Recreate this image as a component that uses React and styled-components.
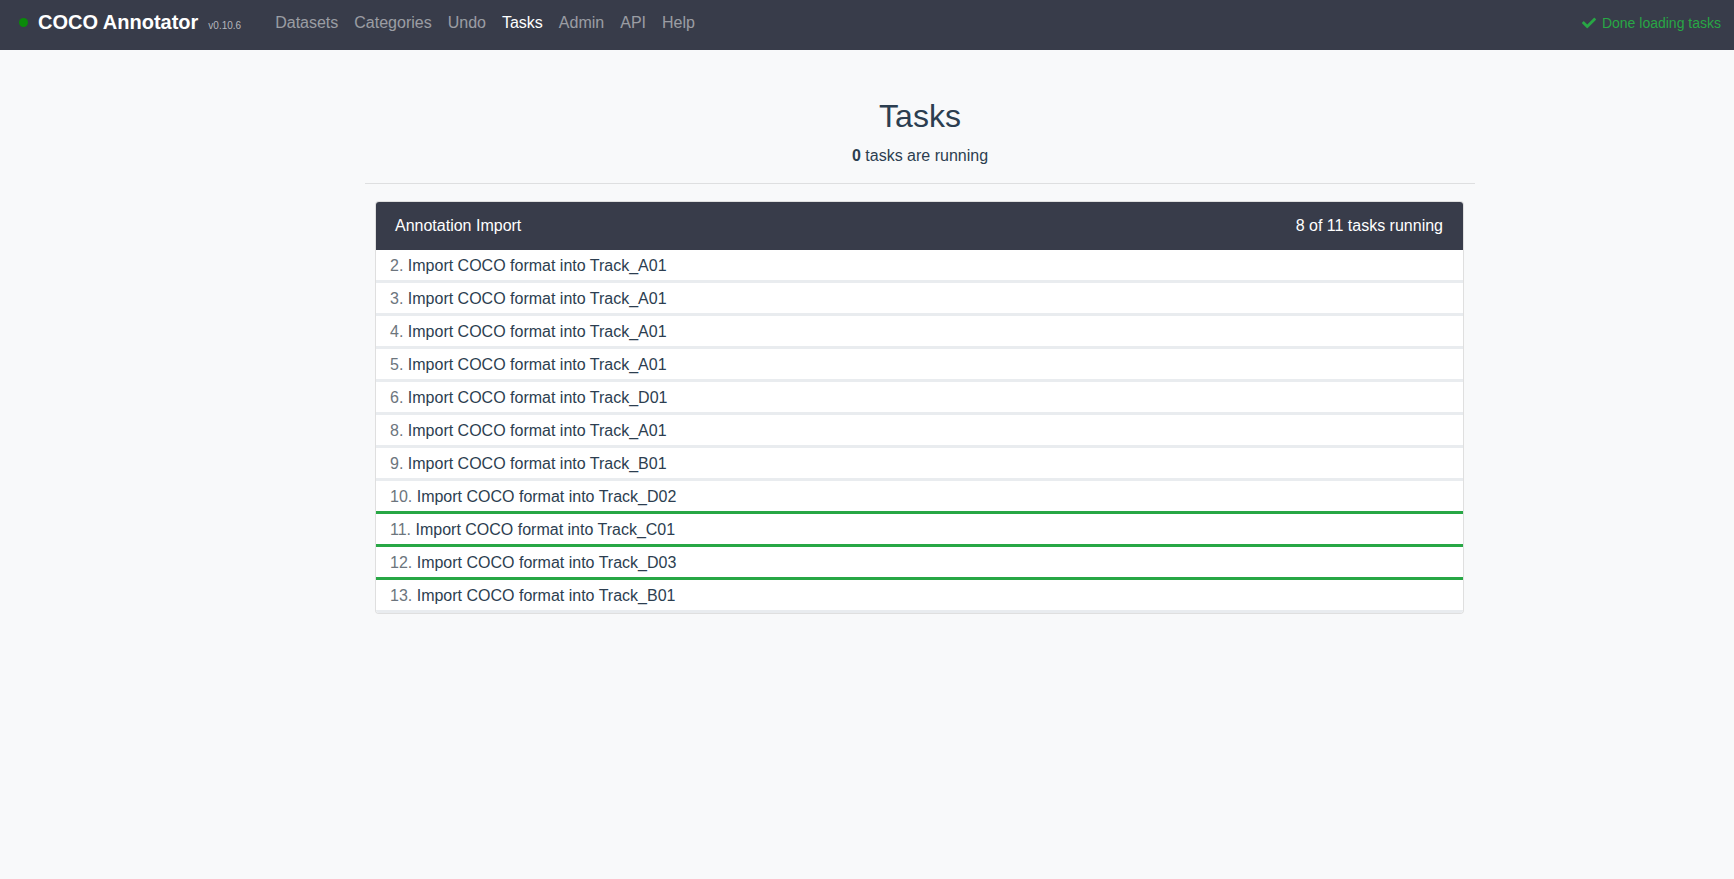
import React from "react";
import styled, { createGlobalStyle } from "styled-components";
import { FaCheck } from "react-icons/fa";

const GlobalStyle = createGlobalStyle`
  body {
    margin: 0;
    background: #f8f9fa;
    font-family: "Liberation Sans", Arial, sans-serif;
    color: #2c3e50;
  }
`;

const Navbar = styled.nav`
  display: flex;
  align-items: center;
  box-sizing: border-box;
  height: 50px;
  padding: 0 13px 5px 19px;
  background: #383c4a;
`;

const Dot = styled.span`
  width: 9px;
  height: 9px;
  border-radius: 50%;
  background: #0a8a0a;
  margin-right: 10px;
`;

const Brand = styled.span`
  color: #fff;
  font-size: 20px;
  font-weight: 700;
`;

const Version = styled.span`
  color: #b4b6bc;
  font-size: 10px;
  font-weight: 400;
  padding-top: 6px;
  margin: 0 26px 0 10px;
`;

const NavLink = styled.a`
  padding: 0 8px;
  font-size: 16px;
  color: ${({ active }) => (active ? "#fff" : "rgba(255, 255, 255, 0.5)")};
  text-decoration: none;
`;

const Status = styled.div`
  margin-left: auto;
  display: flex;
  align-items: center;
  gap: 6px;
  color: #28a745;
  font-size: 14px;
`;

const Container = styled.main`
  box-sizing: border-box;
  width: 1140px;
  margin-left: 350px;
  padding: 0 15px;
`;

const Title = styled.h2`
  margin: 47px 0 0;
  font-size: 32px;
  font-weight: 400;
  line-height: 1.2;
  text-align: center;
`;

const Subtitle = styled.p`
  margin: 9px 0 0;
  font-size: 16px;
  line-height: 24px;
  text-align: center;
`;

const Rule = styled.hr`
  margin: 15px 0 17px;
  border: 0;
  border-top: 1px solid rgba(0, 0, 0, 0.1);
`;

const Card = styled.section`
  margin: 0 11px 0 10px;
  background: #fff;
  border: 1px solid rgba(0, 0, 0, 0.125);
  border-radius: 4px;
  overflow: hidden;
`;

const CardHeader = styled.header`
  display: flex;
  justify-content: space-between;
  align-items: center;
  height: 48px;
  padding: 0 20px 0 19px;
  background: #383c4a;
  color: #fff;
  font-size: 16px;
`;

const Row = styled.div`
  display: flex;
  align-items: center;
  box-sizing: border-box;
  height: 30px;
  padding: 2px 0 0 14px;
  font-size: 16px;
  white-space: pre;
`;

const Num = styled.span`
  color: #6c757d;
`;

const Progress = styled.div`
  height: 3px;
  background: #e9ecef;
`;

const ProgressFill = styled.div`
  height: 100%;
  background: #28a745;
`;

const tasks = [
  { id: 2, track: "Track_A01", progress: 0 },
  { id: 3, track: "Track_A01", progress: 0 },
  { id: 4, track: "Track_A01", progress: 0 },
  { id: 5, track: "Track_A01", progress: 0 },
  { id: 6, track: "Track_D01", progress: 0 },
  { id: 8, track: "Track_A01", progress: 0 },
  { id: 9, track: "Track_B01", progress: 0 },
  { id: 10, track: "Track_D02", progress: 100 },
  { id: 11, track: "Track_C01", progress: 100 },
  { id: 12, track: "Track_D03", progress: 100 },
  { id: 13, track: "Track_B01", progress: 0 },
];

const links = ["Datasets", "Categories", "Undo", "Tasks", "Admin", "API", "Help"];

const App = () => (
  <>
    <GlobalStyle />
    <Navbar>
      <Dot />
      <Brand>COCO Annotator</Brand>
      <Version>v0.10.6</Version>
      {links.map(name => (
        <NavLink key={name} href="#" active={name === "Tasks" ? 1 : 0}>
          {name}
        </NavLink>
      ))}
      <Status>
        <FaCheck size={14} />
        Done loading tasks
      </Status>
    </Navbar>
    <Container>
      <Title>Tasks</Title>
      <Subtitle>
        <strong>0</strong> tasks are running
      </Subtitle>
      <Rule />
      <Card>
        <CardHeader>
          <span>Annotation Import</span>
          <span>8 of 11 tasks running</span>
        </CardHeader>
        {tasks.map(task => (
          <div key={task.id}>
            <Row>
              <Num>{task.id}.</Num> Import COCO format into {task.track}
            </Row>
            <Progress>
              <ProgressFill style={{ width: `${task.progress}%` }} />
            </Progress>
          </div>
        ))}
      </Card>
    </Container>
  </>
);

export default App;
